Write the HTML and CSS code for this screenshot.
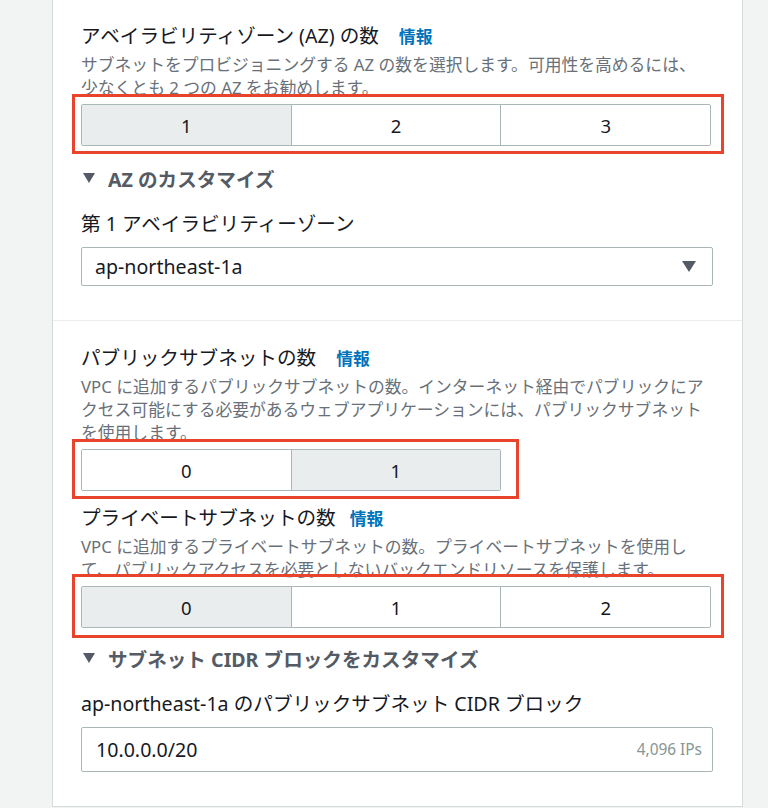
FILE: index.html
```html
<!DOCTYPE html>
<html lang="ja">
<head>
<meta charset="utf-8">
<title>VPC 設定</title>
<link rel="stylesheet" href="styles.css">
</head>
<body>
<div class="panel">
  <section class="section section--first">
    <div class="field-label">アベイラビリティゾーン (AZ) の数<a class="info">情報</a></div>
    <p class="desc">サブネットをプロビジョニングする AZ の数を選択します。可用性を高めるには、<br>少なくとも 2 つの AZ をお勧めします。</p>
    <div class="mark">
      <div class="seg">
        <div class="opt is-selected">1</div>
        <div class="opt">2</div>
        <div class="opt">3</div>
      </div>
    </div>
    <div class="expander">
      <svg class="caret" width="12" height="10" viewBox="0 0 12 10"><path d="M0 0H12L6 10Z" fill="#545b64"/></svg>
      <span>AZ のカスタマイズ</span>
    </div>
    <div class="field-label field-label--spaced">第 1 アベイラビリティーゾーン</div>
    <div class="select">
      <span>ap-northeast-1a</span>
      <svg width="14" height="11" viewBox="0 0 14 11"><path d="M0 0H14L7 11Z" fill="#545b64"/></svg>
    </div>
  </section>
  <section class="section">
    <div class="field-label">パブリックサブネットの数<a class="info">情報</a></div>
    <p class="desc">VPC に追加するパブリックサブネットの数。インターネット経由でパブリックにア<br>クセス可能にする必要があるウェブアプリケーションには、パブリックサブネット<br>を使用します。</p>
    <div class="mark mark--narrow">
      <div class="seg seg--two">
        <div class="opt">0</div>
        <div class="opt is-selected">1</div>
      </div>
    </div>
    <div class="field-label field-label--group">プライベートサブネットの数<a class="info info--tight">情報</a></div>
    <p class="desc">VPC に追加するプライベートサブネットの数。プライベートサブネットを使用し<br>て、パブリックアクセスを必要としないバックエンドリソースを保護します。</p>
    <div class="mark mark--tall">
      <div class="seg">
        <div class="opt is-selected">0</div>
        <div class="opt">1</div>
        <div class="opt">2</div>
      </div>
    </div>
    <div class="expander expander--tight">
      <svg class="caret" width="12" height="10" viewBox="0 0 12 10"><path d="M0 0H12L6 10Z" fill="#545b64"/></svg>
      <span>サブネット CIDR ブロックをカスタマイズ</span>
    </div>
    <div class="field-label field-label--spaced">ap-northeast-1a のパブリックサブネット CIDR ブロック</div>
    <div class="input">
      <span>10.0.0.0/20</span>
      <span class="hint">4,096 IPs</span>
    </div>
  </section>
</div>
</body>
</html>
```

FILE: styles.css
```css
html, body {
  margin: 0;
  padding: 0;
}

body {
  background: #f2f3f3;
  font-family: "Noto Sans", "Noto Sans CJK JP", sans-serif;
  color: #16191f;
  height: 808px;
  overflow: hidden;
}

.panel {
  margin-left: 52px;
  width: 691px;
  box-sizing: border-box;
  background: #ffffff;
  border: 1px solid #d5dbdb;
  border-top: none;
}

.section {
  padding: 23px 29px 34px 28px;
}

.section--first {
  padding-top: 22px;
  padding-bottom: 34px;
}

.section + .section {
  border-top: 1px solid #eaeded;
}

.field-label {
  font-size: 19.6px;
  line-height: 28px;
  display: flex;
  align-items: baseline;
  white-space: nowrap;
}

.field-label--spaced {
  margin-top: 20px;
}

.field-label--group {
  margin-top: 13px;
}

.info {
  margin-left: 20px;
  font-size: 16.8px;
  font-weight: 700;
  color: #0073bb;
}

.info--tight {
  margin-left: 14px;
}

.desc {
  margin: 2px 0 0;
  font-size: 16.8px;
  line-height: 23px;
  color: #687078;
  white-space: nowrap;
}

.mark {
  position: relative;
  width: max-content;
  margin-top: 5px;
}

.mark::after {
  content: "";
  position: absolute;
  left: -9px;
  right: -13px;
  top: -10px;
  bottom: -8px;
  border: 3px solid #e8442b;
  pointer-events: none;
}

.mark--narrow::after {
  right: -18px;
}

.mark--tall::after {
  top: -12px;
  bottom: -10px;
}

.seg {
  display: flex;
  width: 630px;
  height: 42px;
  box-sizing: border-box;
  border: 1px solid #aab7b8;
  border-radius: 2px;
  overflow: hidden;
}

.seg--two {
  width: 420px;
}

.opt {
  flex: 1 1 0;
  display: flex;
  align-items: center;
  justify-content: center;
  font-size: 18.5px;
  color: #16191f;
  background: #ffffff;
}

.opt + .opt {
  border-left: 1px solid #aab7b8;
}

.opt.is-selected {
  background: #eaeded;
}

.expander {
  margin-top: 20px;
  height: 24px;
  display: flex;
  align-items: center;
  font-size: 19.6px;
  font-weight: 700;
  color: #545b64;
  white-space: nowrap;
}

.expander--tight {
  margin-top: 18px;
}

.caret {
  margin-left: 2px;
  margin-right: 13px;
  flex: none;
}

.select {
  margin-top: 9px;
  height: 39px;
  box-sizing: border-box;
  border: 1px solid #aab7b8;
  border-radius: 2px;
  display: flex;
  align-items: center;
  justify-content: space-between;
  padding: 0 16px 0 13px;
  font-size: 19.6px;
}

.input {
  margin-top: 9px;
  height: 45px;
  box-sizing: border-box;
  border: 1px solid #aab7b8;
  border-radius: 2px;
  display: flex;
  align-items: center;
  justify-content: space-between;
  padding: 0 10px 0 14px;
  font-size: 19.6px;
}

.hint {
  font-size: 15.4px;
  color: #879596;
}
```
